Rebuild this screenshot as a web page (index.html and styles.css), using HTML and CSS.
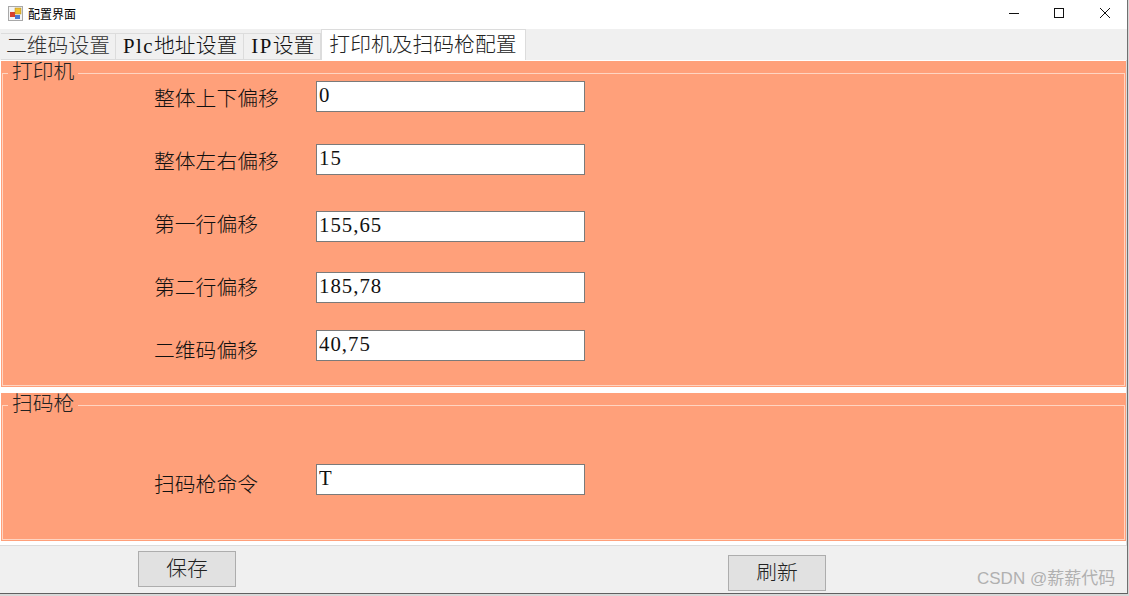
FILE: index.html
```html
<!DOCTYPE html>
<html lang="zh-CN">
<head>
    <meta charset="UTF-8">
    <title>配置界面</title>
    <link rel="stylesheet" href="styles.css">
</head>
<body>

    <div class="window">
        <!-- title bar -->
        <div class="titlebar">
            <svg class="app-icon" width="15" height="15" viewBox="0 0 15 15">
                <rect x="0.5" y="0.5" width="14" height="14" fill="#f4f4f4" stroke="#a8a8a8"/>
                <rect x="2" y="6" width="5" height="5" fill="#d8402c"/>
                <rect x="7" y="2" width="6" height="6" fill="#f0c030" stroke="#a88820" stroke-width="0.5"/>
                <rect x="7" y="9" width="5" height="4" fill="#4a78d0"/>
            </svg>
            <span class="title">配置界面</span>
            <div class="win-buttons">
                <svg width="110" height="12" viewBox="0 0 110 12">
                    <path d="M0 6.5H10" stroke="#111" fill="none"/>
                    <rect x="45.5" y="1.5" width="9" height="9" stroke="#111" fill="none"/>
                    <path d="M91 1L101 11M101 1L91 11" stroke="#111" fill="none"/>
                </svg>
            </div>
        </div>

        <!-- tabs -->
        <div class="tabs">
            <div class="tab tab-first">二维码设置</div>
            <div class="tab"><span class="latin">Plc</span>地址设置</div>
            <div class="tab"><span class="latin">IP</span>设置</div>
            <div class="tab active">打印机及扫码枪配置</div>
        </div>

        <div class="tab-page">
            <div class="panel panel-printer">
                <fieldset class="group">
                    <legend>打印机</legend>
                    <div class="rows">
                        <div class="row row1"><label>整体上下偏移</label><input type="text" value="0"></div>
                        <div class="row row2"><label>整体左右偏移</label><input type="text" value="15"></div>
                        <div class="row row3"><label>第一行偏移</label><input type="text" value="155,65"></div>
                        <div class="row row4"><label>第二行偏移</label><input type="text" value="185,78"></div>
                        <div class="row row5"><label>二维码偏移</label><input type="text" value="40,75"></div>
                    </div>
                </fieldset>
            </div>
            <div class="panel panel-scanner">
                <fieldset class="group">
                    <legend>扫码枪</legend>
                    <div class="rows">
                        <div class="row row-scan"><label>扫码枪命令</label><input type="text" value="T"></div>
                    </div>
                </fieldset>
            </div>
        </div>

        <div class="footer">
            <button class="btn btn-save">保存</button>
            <button class="btn btn-refresh">刷新</button>
        </div>
    </div>

    <div class="watermark">CSDN @薪薪代码</div>

</body>
</html>
```

FILE: styles.css
```css
html, body {
    margin: 0;
    height: 596px;
    overflow: hidden;
}
body {
    position: relative;
    background: #d8d8d8;
    font-family: "Liberation Serif", "Noto Sans CJK SC", serif;
    font-size: 20.8px;
    font-weight: 300;
    color: #111;
}
.latin {
    font-weight: 400;
    letter-spacing: 1.5px;
}
.window {
    width: 1128px;
    height: 594px;
    box-sizing: border-box;
    background: #f0f0f0;
    border-right: 1px solid #707070;
    border-bottom: 1px solid #606060;
}
.titlebar {
    height: 29px;
    box-sizing: border-box;
    padding: 0 0 3px 8px;
    background: #fff;
    display: flex;
    align-items: center;
}
.app-icon {
    margin-right: 5px;
}
.title {
    font-family: "Noto Sans CJK SC", sans-serif;
    font-size: 12px;
    font-weight: 400;
    color: #000;
}
.win-buttons {
    margin-left: auto;
    margin-right: 8px;
    display: flex;
}
.tabs {
    height: 31px;
    display: flex;
    align-items: flex-end;
    padding-left: 1px;
}
.tab {
    height: 27px;
    box-sizing: border-box;
    line-height: 24px;
    padding: 0 6px 0 7px;
    background: #f0f0f0;
    border: 1px solid #dcdcdc;
    border-left: 0;
    white-space: nowrap;
}
.tab-first {
    padding: 0 5px;
    color: #333;
}
.tab.active {
    height: 31px;
    line-height: 29px;
    padding: 0 8px 0 7px;
    background: #fff;
    border-left: 1px solid #dcdcdc;
    border-bottom: 0;
    color: #222;
}
.tab-page {
    height: 486px;
    box-sizing: border-box;
    padding: 1px 0 0 1px;
    background: #fff;
    border-right: 1px solid #dcdcdc;
    border-bottom: 1px solid #dcdcdc;
}
.panel {
    box-sizing: border-box;
    padding: 0 1px 1px;
    background: #ffa07a;
}
.panel-printer {
    height: 326px;
    margin-bottom: 6px;
}
.panel-scanner {
    height: 148px;
}
.group {
    height: 100%;
    box-sizing: border-box;
    margin: 0;
    padding: 0;
    min-width: 0;
    border: 1px solid #ffd5c2;
}
.group legend {
    height: 24px;
    line-height: 22px;
    margin-left: 5px;
    padding: 0 4px;
    color: #222;
}
.rows {
    margin-top: -4px;
}
.row {
    display: flex;
    height: 31px;
}
.row label {
    width: 162px;
    margin-left: 151px;
    line-height: 31px;
}
.row input {
    width: 269px;
    height: 31px;
    box-sizing: border-box;
    margin: 0;
    padding: 0 2px 3px;
    border: 1px solid #7a7a7a;
    border-radius: 0;
    outline: none;
    background: #fff;
    font-family: "Liberation Serif", serif;
    font-size: 20.8px;
    letter-spacing: 1px;
    font-weight: 400;
    color: #111;
}
.row1 label { margin-top: 2px; }
.row2 label { margin-top: 2px; }
.row2 { margin-top: 32px; }
.row3 { margin-top: 36px; }
.row3 label { margin-top: -2px; }
.row4 { margin-top: 30px; }
.row5 { margin-top: 27px; }
.row5 label { margin-top: 5px; }
.row-scan { margin-top: 51px; }
.row-scan label { margin-top: 5px; }
.footer {
    height: 47px;
    display: flex;
    align-items: flex-start;
}
.btn {
    width: 98px;
    height: 36px;
    box-sizing: border-box;
    padding: 0 0 4px;
    background: #e1e1e1;
    border: 1px solid #adadad;
    border-radius: 0;
    font: inherit;
    color: #222;
}
.btn-save {
    margin: 5px 0 0 138px;
}
.btn-refresh {
    margin: 9px 0 0 492px;
}
.watermark {
    position: absolute;
    left: 977px;
    top: 568px;
    font-family: "Liberation Sans", "Noto Sans CJK SC", sans-serif;
    font-size: 17px;
    font-weight: 400;
    line-height: 22px;
    color: #b0b0b0;
    white-space: nowrap;
}
```
